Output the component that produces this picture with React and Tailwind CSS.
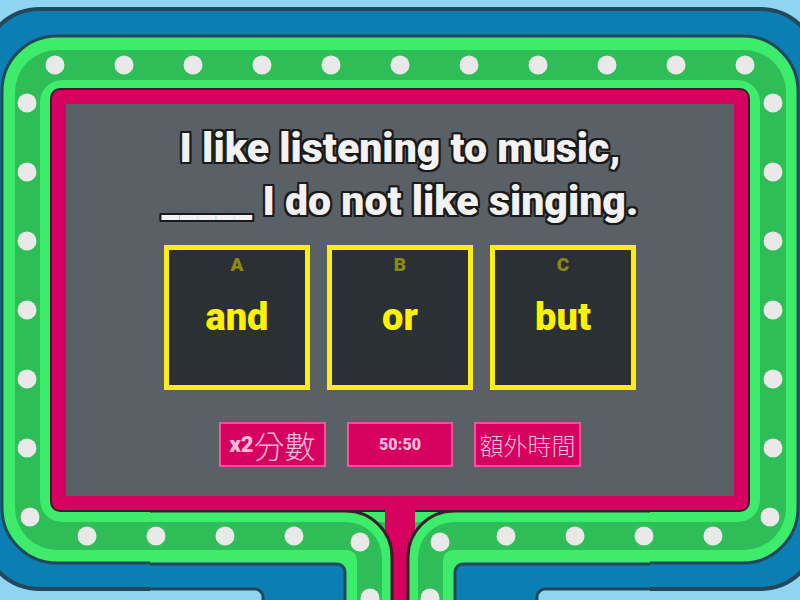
import React from "react"

const GREEN = "#3dec6a"
const DARK_GREEN = "#2fbd57"
const BLUE = "#0b7fb3"
const OUTLINE = "#22485a"
const SKY = "#8fd4f0"
const PINK = "#d6005e"

const topDots = [55, 124, 193, 262, 331, 400, 469, 538, 607, 676, 745]
const sideDots = [103, 172, 241, 310, 379, 448]
const bottomDots = [87, 156, 225, 294, 506, 575, 644, 713]

function Piece({ flip }) {
  // bottom band turning down along the post
  return (
    <g transform={flip ? "translate(800 0) scale(-1 1)" : undefined}>
      <path d="M150 511 H346 A46 46 0 0 1 392 557 V605 H150 Z" fill={GREEN} />
      <path d="M150 511 H346 A46 46 0 0 1 392 557 V605" fill="none" stroke="#3a1c2c" strokeWidth="3" />
      <path d="M150 522 H346 A36 36 0 0 1 382 558 V605 H150 Z" fill={DARK_GREEN} />
      <path d="M150 550 H347 A10 10 0 0 1 357 560 V605 H150 Z" fill={GREEN} />
      <path d="M150 564 H337 A8 8 0 0 1 345 572 V605 H150 Z" fill={BLUE} />
      <path d="M150 564 H337 A8 8 0 0 1 345 572 V605" fill="none" stroke={OUTLINE} strokeWidth="3" />
      <path d="M150 589 H255 A8 8 0 0 1 263 597 V605 H150 Z" fill={SKY} />
      <path d="M150 589 H255 A8 8 0 0 1 263 597 V605" fill="none" stroke={OUTLINE} strokeWidth="3" />
      <circle cx="360" cy="542" r="9.5" fill="#e9e9e9" />
      <circle cx="370" cy="598" r="9.5" fill="#e9e9e9" />
    </g>
  )
}

function FrameArt() {
  return (
    <svg className="absolute inset-0" width="800" height="600" viewBox="0 0 800 600">
      <rect x="-18" y="9" width="836" height="580" rx="58" fill={BLUE} stroke={OUTLINE} strokeWidth="4" />
      <rect x="2" y="36" width="796" height="527" rx="55" fill={GREEN} stroke={OUTLINE} strokeWidth="3" />
      <rect x="15" y="50" width="771" height="500" rx="42" fill={DARK_GREEN} />
      <rect x="40" y="80" width="720" height="442" rx="22" fill={GREEN} />
      <rect x="50" y="88" width="700" height="424" rx="10" fill="#3a1c2c" />
      <rect x="385" y="505" width="30" height="100" fill={PINK} />
      <Piece />
      <Piece flip />
      {topDots.map((x) => (
        <circle key={"t" + x} cx={x} cy="65" r="9.5" fill="#e9e9e9" />
      ))}
      {sideDots.map((y) => (
        <g key={"s" + y}>
          <circle cx="27" cy={y} r="9.5" fill="#e9e9e9" />
          <circle cx="773" cy={y} r="9.5" fill="#e9e9e9" />
        </g>
      ))}
      <circle cx="30" cy="517" r="9.5" fill="#e9e9e9" />
      <circle cx="770" cy="517" r="9.5" fill="#e9e9e9" />
      {bottomDots.map((x) => (
        <circle key={"b" + x} cx={x} cy="536" r="9.5" fill="#e9e9e9" />
      ))}
    </svg>
  )
}

function Answer({ letter, word }) {
  return (
    <div className="flex h-[145px] w-[146px] flex-col items-center border-[5px] border-[#ffec14] bg-[#2b3034] font-['Roboto',sans-serif]">
      <div className="mt-[5px] h-[20px] text-[19px] font-black leading-[20px] text-[#8f8912]">{letter}</div>
      <div className="mb-[26px] flex flex-1 items-center justify-center text-[38px] font-black text-[#fff200]">
        {word}
      </div>
    </div>
  )
}

export default function App() {
  return (
    <div className="relative h-[600px] w-[800px] overflow-hidden bg-[#8fd4f0]">
      <FrameArt />
      <div className="relative px-[52px] pt-[90px]">
        <div className="h-[420px] rounded-[8px] bg-[#d6005e] p-[14px]">
          <div className="flex h-full flex-col items-center bg-[#596066] pt-[18px]">
            <p className="text-center font-['Roboto',sans-serif] text-[41px] font-black leading-[53px] text-[#f2f2f2] [text-shadow:2px_0_#1a1a1a,-2px_0_#1a1a1a,0_2px_#1a1a1a,0_-2px_#1a1a1a,2px_2px_#1a1a1a,-2px_2px_#1a1a1a,2px_-2px_#1a1a1a,-2px_-2px_#1a1a1a]">
              I like listening to music,
              <br />
              _____ I do not like singing.
            </p>

            <div className="mt-[17px] flex gap-[17px]">
              <Answer letter="A" word="and" />
              <Answer letter="B" word="or" />
              <Answer letter="C" word="but" />
            </div>

            <div className="mt-[32px] flex gap-[21px] text-[#ffbedb]">
              <button className="flex h-[45px] w-[107px] items-center justify-center border-2 border-[#ff4f9f] bg-[#d6005e]">
                <span className="font-['Roboto',sans-serif] text-[22px] font-black">x2</span>
                <span className="font-['Noto_Sans_CJK_TC',sans-serif] text-[31px] font-light leading-none">分數</span>
              </button>
              <button className="flex h-[45px] w-[106px] items-center justify-center border-2 border-[#ff4f9f] bg-[#d6005e] font-['Roboto',sans-serif] text-[16px] font-black">
                50:50
              </button>
              <button className="flex h-[45px] w-[107px] items-center justify-center border-2 border-[#ff4f9f] bg-[#d6005e] font-['Noto_Sans_CJK_TC',sans-serif] text-[24px] font-light">
                額外時間
              </button>
            </div>
          </div>
        </div>
      </div>
    </div>
  )
}
